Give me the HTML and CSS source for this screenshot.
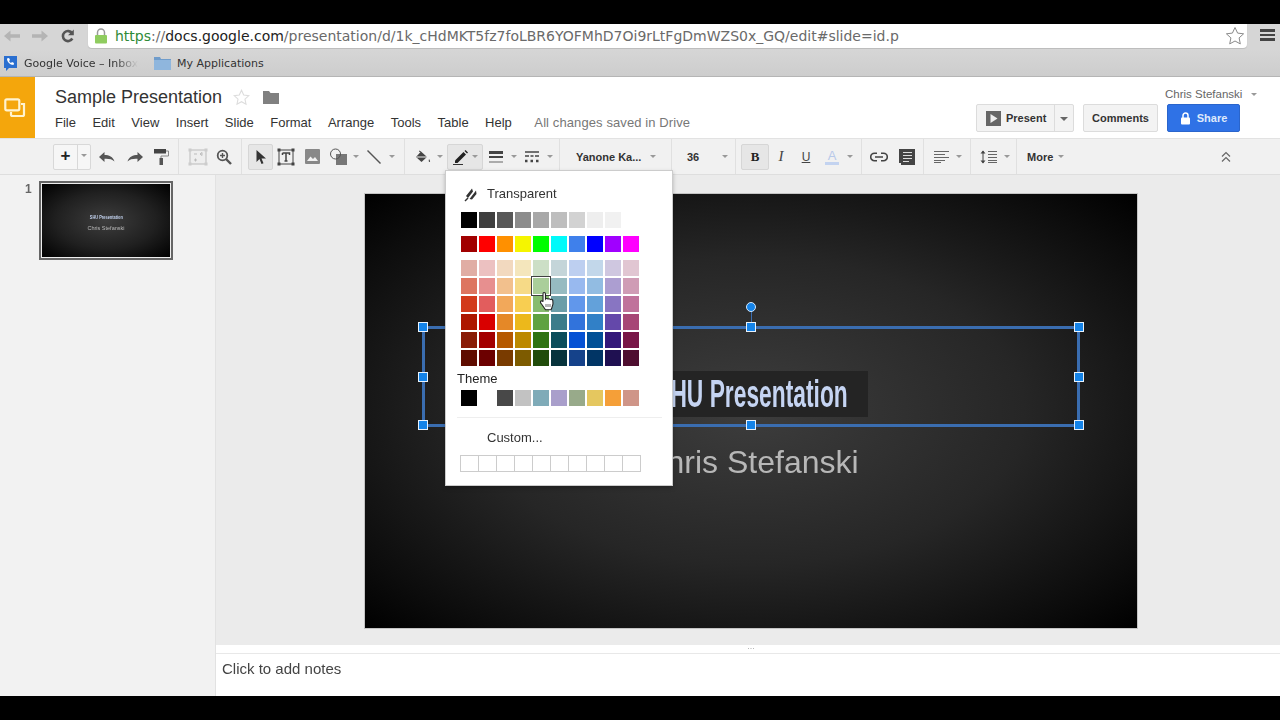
FILE: index.html
```html
<!DOCTYPE html>
<html lang="en">

<head>
  <meta charset="UTF-8" />
  <title>Sample Presentation</title>
  <link rel="stylesheet" href="styles.css">
</head>

<body>
  <div class="page">
    <div class="letterbox"></div>

    <!-- browser bar -->
    <div class="browser-bar">
      <svg class="nav-ico" width="20" height="16" viewBox="0 0 20 16"><path d="M18 6.300H8.500V2.500L2 8l6.500 5.500V9.700H18z" fill="#b4b4b4"/></svg>
      <svg class="nav-ico" width="20" height="16" viewBox="0 0 20 16"><path d="M2 6.300h9.500V2.500L18 8l-6.500 5.500V9.700H2z" fill="#b4b4b4"/></svg>
      <svg class="nav-ico" width="20" height="16" viewBox="0 0 20 16"><path d="M14.300 10.500a5 5 0 1 1-.2-5.200" fill="none" stroke="#555" stroke-width="2.600"/><path d="M15.800 1.500v5.800h-5.800z" fill="#555"/></svg>
      <div class="omnibox">
        <svg class="lock" width="14" height="16" viewBox="0 0 14 16"><path d="M3.500 7V4.500a3.500 3.500 0 0 1 7 0V7" fill="none" stroke="#9a9a9a" stroke-width="1.500"/><rect x="1" y="7" width="12" height="8.500" rx="1" fill="#8fcc5f"/></svg>
        <span class="url"><span class="url-https">https</span>://<span class="url-host">docs.google.com</span>/presentation/d/1k_cHdMKT5fz7foLBR6YOFMhD7Oi9rLtFgDmWZS0x_GQ/edit#slide=id.p</span>
        <svg class="url-star" width="20" height="20" viewBox="0 0 20 20"><path d="M10 1.500l2.600 5.600 6 .7-4.500 4.100 1.200 6L10 15l-5.300 2.900 1.200-6L1.400 7.800l6-.7z" fill="#fff" stroke="#8a8a8a"/></svg>
      </div>
      <div class="hamburger"><i></i><i></i><i></i></div>
    </div>

    <!-- bookmarks -->
    <div class="bookmarks">
      <div class="bookmark voice">
        <svg width="15" height="17" viewBox="0 0 15 17"><path d="M1 1h13v12H6l-3 3v-3H1z" fill="#2a6fd0"/><path d="M4 3.500l2-.5 1 2-1 1c.5 1 1.200 1.700 2 2l1-1 2 1-.5 2C7 10 4 7 4 3.500z" fill="#fff"/></svg>
        <span class="bookmark-fade">Google Voice – Inbox</span>
      </div>
      <div class="bookmark">
        <svg width="17" height="14" viewBox="0 0 17 14"><path d="M0 1h6l1 2h10v11H0z" fill="#6f9ccb"/><rect y="4" width="17" height="10" fill="#8fb6dd"/></svg>
        <span>My Applications</span>
      </div>
    </div>

    <!-- docs header -->
    <div class="docs-header">
      <div class="logo">
        <svg width="22" height="20" viewBox="0 0 22 20"><rect x="1.300" y="1.300" width="14" height="11" rx="1.500" fill="none" stroke="#fff3d0" stroke-width="2.200"/><path d="M17 6h3v10.500a1.500 1.500 0 0 1-1.500 1.500H8.500A1.500 1.500 0 0 1 7 16.500V14" fill="none" stroke="#fff3d0" stroke-width="2.200"/></svg>
      </div>
      <div class="title-block">
        <div class="title-row">
          <span class="doc-title">Sample Presentation</span>
          <svg class="title-star" width="17" height="17" viewBox="0 0 20 20"><path d="M10 1.500l2.600 5.600 6 .7-4.500 4.100 1.200 6L10 15l-5.300 2.900 1.200-6L1.400 7.800l6-.7z" fill="#fff" stroke="#ddd" stroke-width="1.300"/></svg>
          <svg class="title-folder" width="16" height="13" viewBox="0 0 16 13"><path d="M0 0h6l1.500 2H16v11H0z" fill="#808080"/></svg>
        </div>
        <div class="menu-row">
          <span>File</span><span>Edit</span><span>View</span><span>Insert</span><span>Slide</span><span>Format</span><span>Arrange</span><span>Tools</span><span>Table</span><span>Help</span>
          <span class="saved">All changes saved in Drive</span>
        </div>
      </div>
      <div class="header-right">
        <div class="user">Chris Stefanski <i class="caret"></i></div>
        <div class="header-btns">
          <div class="btn present">
            <span class="present-main">
              <svg width="15" height="15" viewBox="0 0 15 15"><rect width="15" height="15" fill="#666"/><path d="M4.500 3v9l7-4.500z" fill="#eee"/></svg>
              Present
            </span>
            <span class="present-drop"><i class="caret dark"></i></span>
          </div>
          <div class="btn comments">Comments</div>
          <div class="btn share">
            <svg width="11" height="13" viewBox="0 0 11 13"><path d="M3 6V3.500a2.500 2.500 0 0 1 5 0V6" fill="none" stroke="#fff" stroke-width="1.500"/><rect x="1" y="5.500" width="9" height="7" rx="1" fill="#fff"/></svg>
            Share
          </div>
        </div>
      </div>
    </div>

    <!-- toolbar -->
    <div class="toolbar">
      <div class="tb-group g-insert">
        <div class="plus-btn"><span class="plus-main">+</span><span class="plus-drop"><i class="caret"></i></span></div>
        <div class="tb-btn"><svg width="18" height="12" viewBox="0 0 18 12"><path d="M1 6l5.500-5v3c4.500 0 8.500 1.500 10 6.500-2.500-2.500-5.500-3-10-2.800V11z" fill="#555"/></svg></div>
        <div class="tb-btn"><svg width="18" height="12" viewBox="0 0 18 12"><path d="M17 6l-5.500-5v3C7 4 3 5.500 1.500 10.500c2.500-2.500 5.500-3 10-2.800V11z" fill="#555"/></svg></div>
        <div class="tb-btn paint-btn"><svg width="15" height="17" viewBox="0 0 15 17"><rect x="0" y="1" width="12" height="4.500" fill="#444"/><path d="M12 3h2.500v5H7v2" fill="none" stroke="#888" stroke-width="1"/><rect x="5.500" y="10" width="3.500" height="7" fill="#555"/></svg></div>
      </div>
      <div class="tb-group g-view">
        <div class="tb-btn"><svg width="20" height="18" viewBox="0 0 20 18"><rect x="2" y="2" width="16" height="14" fill="#eee" stroke="#bbb"/><rect x="0.500" y="0.500" width="3" height="3" fill="#ccc"/><rect x="16.500" y="0.500" width="3" height="3" fill="#ccc"/><rect x="0.500" y="14.500" width="3" height="3" fill="#ccc"/><rect x="16.500" y="14.500" width="3" height="3" fill="#ccc"/><path d="M6 6h3M12 6l2-1.500v3zM6 12h3M7.500 10.500v3" stroke="#bbb" fill="none"/></svg></div>
        <div class="tb-btn"><svg width="16" height="16" viewBox="0 0 16 16"><circle cx="6.500" cy="6.500" r="4.800" fill="none" stroke="#555" stroke-width="1.800"/><path d="M10 10l5 5" stroke="#555" stroke-width="2.400"/><path d="M4 6.500h5M6.500 4v5" stroke="#555" stroke-width="1.400"/></svg></div>
      </div>
      <div class="tb-group g-draw">
        <div class="tb-btn active cursor-btn"><svg width="12" height="16" viewBox="0 0 12 16"><path d="M1.500 1v12l3-3 2 5 2-.8-2-4.700H11z" fill="#333"/></svg></div>
        <div class="tb-btn"><svg width="18" height="18" viewBox="0 0 18 18"><rect x="2" y="2" width="14" height="14" fill="none" stroke="#444"/><path d="M5.500 5h7v2M9 5v8M7.500 13h3M5.500 5v2" fill="none" stroke="#444" stroke-width="1.500"/><g fill="#444"><rect x="0.500" y="0.500" width="3" height="3"/><rect x="14.500" y="0.500" width="3" height="3"/><rect x="0.500" y="14.500" width="3" height="3"/><rect x="14.500" y="14.500" width="3" height="3"/></g></svg></div>
        <div class="tb-btn"><svg width="15" height="15" viewBox="0 0 15 15"><rect width="15" height="15" rx="1" fill="#888"/><path d="M2 12l3.500-4.500L8 10l2-2 3 4z" fill="#f1f1f1"/></svg></div>
        <div class="tb-btn"><svg width="19" height="17" viewBox="0 0 19 17"><rect x="7" y="6" width="11" height="11" fill="#777"/><circle cx="6.500" cy="6" r="5" fill="none" stroke="#555"/></svg></div>
        <i class="caret tb-caret"></i>
        <div class="tb-btn"><svg width="16" height="16" viewBox="0 0 16 16"><path d="M1.500 1.500l13 13" stroke="#555" stroke-width="1.400"/></svg></div>
        <i class="caret tb-caret"></i>
      </div>
      <div class="tb-group g-line">
        <div class="tb-btn"><svg width="17" height="16" viewBox="0 0 17 16"><path d="M2 8l5-5.500L13 8l-5.500 5z" fill="#444"/><path d="M2.500 8h10.500" stroke="#f1f1f1"/><path d="M5 2l2 1" stroke="#444"/><path d="M15 10c1 1.500 1.500 2.500.7 3-.9.300-1.200-.8-.7-3z" fill="#444"/></svg></div>
        <i class="caret tb-caret"></i>
        <div class="tb-btn active pen-btn">
          <svg width="16" height="16" viewBox="0 0 16 16"><path d="M2 11.500L10.500 3l2.500 2.500L4.500 14H2z" fill="#222"/><path d="M11.500 2l1-1 2.500 2.500-1 1z" fill="#222"/><path d="M0 15.500h10" stroke="#333"/></svg>
          <i class="caret"></i>
        </div>
        <div class="tb-btn"><svg width="14" height="12" viewBox="0 0 14 12"><rect width="14" height="3" fill="#444"/><rect y="5" width="14" height="2" fill="#444"/><rect y="10.500" width="14" height="1" fill="#666"/></svg></div>
        <i class="caret tb-caret"></i>
        <div class="tb-btn"><svg width="14" height="12" viewBox="0 0 14 12"><path d="M0 1h14" stroke="#444" stroke-width="1.500"/><path d="M0 5h4M5.500 5h3M10 5h4" stroke="#444" stroke-width="1.500"/><path d="M0 10h2.500M5.500 10h2.500M11 10h2.500" stroke="#444" stroke-width="2.500"/></svg></div>
        <i class="caret tb-caret"></i>
      </div>
      <div class="tb-group g-font">
        <span class="tb-label font-name">Yanone Ka...</span>
        <i class="caret tb-caret"></i>
      </div>
      <div class="tb-group g-size">
        <span class="tb-label size-name">36</span>
        <i class="caret tb-caret"></i>
      </div>
      <div class="tb-group g-format">
        <div class="tb-btn active bold-btn">B</div>
        <div class="tb-btn italic-btn">I</div>
        <div class="tb-btn underline-btn">U</div>
        <div class="tb-btn color-btn"><span>A</span></div>
        <i class="caret tb-caret"></i>
      </div>
      <div class="tb-group g-link">
        <div class="tb-btn"><svg width="18" height="10" viewBox="0 0 18 10"><path d="M7 1.200H4.500a3.800 3.800 0 0 0 0 7.600H7M11 1.200h2.500a3.800 3.800 0 0 1 0 7.600H11M5 5h8" fill="none" stroke="#444" stroke-width="1.600"/></svg></div>
        <div class="tb-btn"><svg width="18" height="16" viewBox="0 0 18 16"><path d="M1 0h16v16H3v-2H1z" fill="#444"/><path d="M5 3.500h9M5 6.500h9M5 9.500h9M5 12.500h6" stroke="#ddd"/></svg></div>
      </div>
      <div class="tb-group g-align">
        <div class="tb-btn"><svg width="15" height="12" viewBox="0 0 15 12"><path d="M0 .5h15M0 3.500h11M0 6.500h15M0 9.500h11M0 11.500h7" stroke="#666"/></svg></div>
        <i class="caret tb-caret"></i>
      </div>
      <div class="tb-group g-spacing">
        <div class="tb-btn"><svg width="18" height="14" viewBox="0 0 18 14"><path d="M3 1v12" stroke="#444"/><path d="M0.500 3.500L3 .5l2.500 3zM0.500 10.500L3 13.500l2.500-3z" fill="#444"/><path d="M8 1.500h9M8 4.500h9M8 7.500h9M8 10.500h9M8 12.500h9" stroke="#666"/></svg></div>
        <i class="caret tb-caret"></i>
      </div>
      <div class="tb-group g-more">
        <span class="tb-label more-name">More</span>
        <i class="caret tb-caret"></i>
      </div>
      <div class="tb-btn collapse"><svg width="12" height="12" viewBox="0 0 12 12"><path d="M2 5.500L6 1.500l4 4M2 10.500l4-4 4 4" fill="none" stroke="#666" stroke-width="1.200"/></svg></div>
    </div>

    <!-- main area -->
    <div class="workspace">
      <div class="filmstrip">
        <span class="slide-num">1</span>
        <div class="thumb">
          <div class="thumb-inner">
            <span class="thumb-title">SHU Presentation</span>
            <span class="thumb-sub">Chris Stefanski</span>
          </div>
        </div>
      </div>
      <div class="editor">
        <div class="canvas">
          <div class="slide">
            <div class="title-band"><span class="title-text">SHU Presentation</span></div>
            <div class="subtitle">Chris Stefanski</div>
            <div class="sel-box"></div>
            <div class="rotate-line"></div>
            <i class="rotate-knob"></i>
            <i class="handle h-tl"></i><i class="handle h-tc"></i><i class="handle h-tr"></i>
            <i class="handle h-ml"></i><i class="handle h-mr"></i>
            <i class="handle h-bl"></i><i class="handle h-bc"></i><i class="handle h-br"></i>
          </div>
        </div>
        <div class="notes-grip"><span>...</span></div>
        <div class="notes">Click to add notes</div>
      </div>
    </div>

    <div class="letterbox bottom"></div>

    <!-- colour menu -->
    <div class="color-menu">
      <div class="cm-item">
        <svg class="cm-ico" width="13" height="15" viewBox="0 0 13 15"><path d="M2 9l6-7.500 1 3L4 11zM5.500 12L12 3.500l.5 3.500L8 12.500z" fill="#333"/><path d="M1 14l3-3" stroke="#333" stroke-width="1.500"/></svg>
        Transparent
      </div>
      <div class="swatches">
        <i style="background:#000"></i><i style="background:#3f3f3f"></i><i style="background:#585858"></i><i style="background:#8c8c8c"></i><i style="background:#a8a8a8"></i><i style="background:#bebebe"></i><i style="background:#d2d2d2"></i><i style="background:#eee"></i><i style="background:#f1f1f1"></i><i style="background:#fff"></i>
      </div>
      <div class="swatches brights tinted">
        <i style="background:#980000"></i><i style="background:#f00"></i><i style="background:#f90"></i><i style="background:#ff0"></i><i style="background:#0f0"></i><i style="background:#0ff"></i><i style="background:#4a86e8"></i><i style="background:#00f"></i><i style="background:#90f"></i><i style="background:#f0f"></i>
      </div>
      <div class="swatches shades tinted">
        <i style="background:#e6b8af"></i><i style="background:#f4cccc"></i><i style="background:#fce5cd"></i><i style="background:#fff2cc"></i><i style="background:#d9ead3"></i><i style="background:#d0e0e3"></i><i style="background:#c9daf8"></i><i style="background:#cfe2f3"></i><i style="background:#d9d2e9"></i><i style="background:#ead1dc"></i>
        <i style="background:#dd7e6b"></i><i style="background:#ea9999"></i><i style="background:#f9cb9c"></i><i style="background:#ffe599"></i><i class="hovered" style="background:#b6d7a8"></i><i style="background:#a2c4c9"></i><i style="background:#a4c2f4"></i><i style="background:#9fc5e8"></i><i style="background:#b4a7d6"></i><i style="background:#d5a6bd"></i>
        <i style="background:#cc4125"></i><i style="background:#e06666"></i><i style="background:#f6b26b"></i><i style="background:#ffd966"></i><i style="background:#93c47d"></i><i style="background:#76a5af"></i><i style="background:#6d9eeb"></i><i style="background:#6fa8dc"></i><i style="background:#8e7cc3"></i><i style="background:#c27ba0"></i>
        <i style="background:#a61c00"></i><i style="background:#c00"></i><i style="background:#e69138"></i><i style="background:#f1c232"></i><i style="background:#6aa84f"></i><i style="background:#45818e"></i><i style="background:#3c78d8"></i><i style="background:#3d85c6"></i><i style="background:#674ea7"></i><i style="background:#a64d79"></i>
        <i style="background:#85200c"></i><i style="background:#900"></i><i style="background:#b45f06"></i><i style="background:#bf9000"></i><i style="background:#38761d"></i><i style="background:#134f5c"></i><i style="background:#15c"></i><i style="background:#0b5394"></i><i style="background:#351c75"></i><i style="background:#741b47"></i>
        <i style="background:#5b0f00"></i><i style="background:#600"></i><i style="background:#783f04"></i><i style="background:#7f6000"></i><i style="background:#274e13"></i><i style="background:#0c343d"></i><i style="background:#1c4587"></i><i style="background:#073763"></i><i style="background:#20124d"></i><i style="background:#4c1130"></i>
      </div>
      <div class="cm-theme">Theme</div>
      <div class="swatches">
        <i style="background:#000"></i><i style="background:#fff"></i><i style="background:#484848"></i><i style="background:#c2c2c2"></i><i style="background:#7fabb8"></i><i style="background:#a99fcb"></i><i style="background:#98aa8a"></i><i style="background:#e5c75f"></i><i style="background:#f59f38"></i><i style="background:#cf9588"></i>
      </div>
      <div class="cm-sep"></div>
      <div class="cm-item cm-custom">Custom...</div>
      <div class="custom-row">
        <i></i><i></i><i></i><i></i><i></i><i></i><i></i><i></i><i></i><i></i>
      </div>
      <svg class="hand" width="17" height="20" viewBox="0 0 17 20"><path d="M5 1.500c1 0 1.500.7 1.500 1.500v5c.5-.7 2-.7 2.500 0 .7-.5 2-.3 2.300.5.800-.4 2.200-.2 2.500 1 .5 2 .2 5-1 7.500l-.8 1.800H6.500L2.500 13c-1-1.200-1.500-2.300-.5-3 .8-.5 1.800.2 2 .8V3c0-.8.300-1.500 1-1.500z" fill="#fff" stroke="#222" stroke-width="1.100"/><path d="M7 13v3M9 13v3M11 13v3" stroke="#444" stroke-width=".8"/></svg>
    </div>
  </div>
</body>

</html>
```

FILE: styles.css
```css
/* Page frame */
* {
  box-sizing: border-box;
}

body {
  margin: 0;
  background: #000;
  font-family: 'Liberation Sans', Arial, sans-serif;
  overflow: hidden;
}

/* the reference is a video frame, so everything is slightly soft */
.page {
  width: 1280px;
  height: 720px;
  position: relative;
  overflow: hidden;
  display: flex;
  flex-direction: column;
  filter: blur(0.35px);
}

.letterbox {
  height: 24px;
  background: #000;
  flex: none;
}

/* Browser chrome */
.browser-bar {
  height: 25px;
  flex: none;
  display: flex;
  background: #d6d6d6;
  padding-left: 2px;
  align-items: flex-start;
}

.nav-ico {
  width: 20px;
  margin: 4px 8px 0 0;
  flex: none;
}

.omnibox {
  width: 1159px;
  height: 24px;
  margin-left: 2px;
  background: #fff;
  border-radius: 0 0 4px 4px;
  box-shadow: 0 1px 1px #bbb;
  display: flex;
  align-items: center;
  padding-left: 6px;
}

.lock {
  margin-right: 7px;
  flex: none;
}

.url {
  font-family: 'DejaVu Sans', sans-serif;
  font-size: 14px;
  color: #6a6a6a;
  white-space: nowrap;
}

.url-https {
  color: #2f8a38;
}

.url-host {
  color: #222;
}

.url-star {
  margin-left: auto;
  margin-right: 2px;
}

.hamburger {
  margin: 5px 0 0 13px;
  width: 15px;
  display: flex;
  flex-direction: column;
  gap: 2px;
}

.hamburger i {
  height: 2.500px;
  background: #444;
}

.bookmarks {
  height: 28px;
  flex: none;
  display: flex;
  align-items: center;
  background: linear-gradient(#d6d6d6, #cdcdcd);
  border-bottom: 1px solid #b5b5b5;
  padding: 1px 0 0 3px;
  font-family: 'DejaVu Sans', sans-serif;
  font-size: 11px;
  color: #333;
}

.bookmark {
  display: flex;
  align-items: center;
  gap: 6px;
}

.voice {
  width: 151px;
}

.bookmark-fade {
  width: 114px;
  white-space: nowrap;
  overflow: hidden;
  -webkit-mask-image: linear-gradient(90deg, #000 80%, transparent);
  mask-image: linear-gradient(90deg, #000 80%, transparent);
}

/* Docs header */
.docs-header {
  height: 61px;
  flex: none;
  display: flex;
  background: #fff;
}

.logo {
  width: 35px;
  background: #f4a60c;
  display: flex;
  align-items: center;
  padding-left: 4px;
}

.title-block {
  padding: 8px 0 0 20px;
}

.title-row {
  display: flex;
  align-items: center;
  height: 24px;
}

.doc-title {
  font-size: 18px;
  color: #333;
}

.title-star {
  margin-left: 11px;
}

.title-folder {
  margin-left: 13px;
}

.menu-row {
  display: flex;
  margin-top: 6px;
  font-size: 13px;
  color: #333;
  gap: 16.500px;
  white-space: nowrap;
}

.menu-row .saved {
  color: #777;
  margin-left: 6px;
  letter-spacing: 0.1px;
}

.header-right {
  margin-left: auto;
  width: 304px;
  padding: 11px 40px 0 0;
}

.user {
  font-size: 11.500px;
  color: #666;
  padding-left: 189px;
  white-space: nowrap;
  height: 16px;
}

.user .caret {
  margin-left: 5px;
}

.header-btns {
  display: flex;
  gap: 9px;
}

.btn {
  height: 28px;
  font-size: 11px;
  font-weight: bold;
  border-radius: 2px;
  display: flex;
  align-items: center;
  white-space: nowrap;
}

.present,
.comments {
  background: #f3f3f3;
  border: 1px solid #dcdcdc;
  color: #333;
}

.present {
  width: 98px;
}

.present-main {
  width: 78px;
  height: 100%;
  display: flex;
  align-items: center;
  gap: 5px;
  padding-left: 9px;
  border-right: 1px solid #dcdcdc;
}

.present-drop {
  flex: 1;
  text-align: center;
}

.comments {
  width: 75px;
  justify-content: center;
}

.share {
  width: 73px;
  justify-content: center;
  gap: 6px;
  background: #2f72e6;
  color: #dfe9fb;
  border: 1px solid #2a65cc;
}

.caret {
  display: inline-block;
  width: 0;
  height: 0;
  border-left: 3px solid transparent;
  border-right: 3px solid transparent;
  border-top: 3px solid #999;
  vertical-align: middle;
}

.caret.dark {
  border-left-width: 4px;
  border-right-width: 4px;
  border-top: 4px solid #666;
}

/* Toolbar */
.toolbar {
  height: 37px;
  flex: none;
  display: flex;
  align-items: stretch;
  background: #f1f1f1;
  border-top: 1px solid #e2e2e2;
  border-bottom: 1px solid #dedede;
  padding-left: 53px;
  padding-right: 41px;
}

.tb-group {
  display: flex;
  align-items: center;
  flex: none;
  border-right: 1px solid #e0e0e0;
}

.g-insert { width: 126px; gap: 2px; }
.g-view { width: 63px; padding-left: 6px; }
.g-draw { width: 163px; padding-left: 6px; }
.g-line { width: 155px; padding-left: 4px; }
.g-font { width: 112px; padding-left: 16px; }
.g-size { width: 64px; padding-left: 15px; }
.g-format { width: 126px; padding-left: 5px; }
.g-link { width: 62px; padding-left: 4px; gap: 2px; }
.g-align { width: 47px; padding-left: 4px; }
.g-spacing { width: 46px; padding-left: 5px; }
.g-more { padding-left: 10px; border-right: 0; }

.tb-btn {
  width: 26px;
  height: 26px;
  flex: none;
  display: flex;
  align-items: center;
  justify-content: center;
}

.tb-btn.active {
  background: #e6e6e6;
  border: 1px solid #d6d6d6;
  border-radius: 2px;
}

.paint-btn {
  margin-left: -2px;
}

.cursor-btn {
  width: 25px;
}

.pen-btn {
  width: 36px;
  margin-left: 2px;
  gap: 3px;
}

.tb-caret {
  margin: 0 2px;
  flex: none;
}

.plus-btn {
  width: 38px;
  height: 26px;
  margin-right: 1px;
  display: flex;
  background: #f6f6f6;
  border: 1px solid #d8d8d8;
  border-radius: 2px;
}

.plus-main {
  width: 24px;
  text-align: center;
  font-size: 17px;
  font-weight: bold;
  line-height: 22px;
  color: #222;
  border-right: 1px solid #d8d8d8;
}

.plus-drop {
  flex: 1;
  text-align: center;
  line-height: 20px;
}

.tb-label {
  font-size: 11px;
  font-weight: bold;
  color: #333;
  white-space: nowrap;
}

.font-name { width: 72px; }
.size-name { width: 33px; }
.more-name { width: 29px; }

.bold-btn {
  width: 28px;
  font-size: 13px;
  font-weight: bold;
  font-family: 'Liberation Serif', serif;
  color: #222;
}

.italic-btn {
  width: 24px;
  font-family: 'Liberation Serif', serif;
  font-style: italic;
  font-size: 15px;
  color: #444;
}

.underline-btn {
  font-size: 12px;
  color: #444;
  text-decoration: underline;
}

.color-btn span {
  font-size: 13px;
  color: #b8c9ea;
  border-bottom: 3px solid #c3d3f0;
  line-height: 13px;
  padding: 0 3px;
}

.collapse {
  margin-left: auto;
  align-self: center;
}

/* Workspace */
.workspace {
  height: 521px;
  flex: none;
  display: flex;
}

.filmstrip {
  width: 216px;
  flex: none;
  background: #f2f2f2;
  border-right: 1px solid #e2e2e2;
  display: flex;
  align-items: flex-start;
  padding: 6px 0 0 25px;
}

.slide-num {
  width: 14px;
  font-size: 12px;
  font-weight: bold;
  color: #666;
  padding-top: 1px;
}

.thumb {
  width: 134px;
  height: 79px;
  border: 2px solid #666;
  padding: 1px;
  background: #eee;
}

.thumb-inner {
  height: 100%;
  background: radial-gradient(ellipse at center, #3d3d3d 0%, #202020 55%, #000 100%);
  display: flex;
  flex-direction: column;
  align-items: center;
  padding-top: 30px;
  gap: 5px;
}

.thumb-title {
  font-size: 6px;
  font-weight: bold;
  color: #c3d3f0;
  white-space: nowrap;
  transform: scaleX(0.65);
}

.thumb-sub {
  font-size: 5.500px;
  color: #bbb;
}

.editor {
  flex: 1;
  display: flex;
  flex-direction: column;
}

.canvas {
  height: 470px;
  flex: none;
  background: #ebebeb;
  padding: 19px 0 0 149px;
}

/* Slide and its selection */
.slide {
  width: 772px;
  height: 434px;
  position: relative;
  background: radial-gradient(ellipse at center, #3d3d3d 0%, #262626 50%, #0c0c0c 85%, #000 100%);
  box-shadow: 0 0 0 1px #c4c4c4;
}

.title-band {
  position: absolute;
  left: 269px;
  top: 177px;
  width: 234px;
  height: 46px;
  background: #242424;
  display: flex;
  align-items: center;
  justify-content: center;
  overflow: hidden;
}

/* Yanone Kaffeesatz is not available, so a bold sans is squeezed to its width */
.title-text {
  flex: none;
  color: #c5d4f2;
  font-weight: bold;
  font-size: 38px;
  line-height: 48px;
  white-space: nowrap;
  transform: scaleX(0.6);
}

.subtitle {
  position: absolute;
  left: 0;
  right: 0;
  top: 249px;
  text-align: center;
  font-size: 32px;
  line-height: 38px;
  color: #b7b7b7;
}

.sel-box {
  position: absolute;
  left: 57px;
  top: 132px;
  width: 658px;
  height: 101px;
  border: 3px solid #3a6db0;
}

.rotate-line {
  position: absolute;
  left: 386px;
  top: 113px;
  width: 1px;
  height: 20px;
  background: #3a6db0;
}

.rotate-knob {
  position: absolute;
  left: 381px;
  top: 108px;
  width: 10px;
  height: 10px;
  border-radius: 50%;
  background: #1483e8;
  border: 1px solid #d5e8fb;
}

.handle {
  position: absolute;
  width: 10px;
  height: 10px;
  background: #1483e8;
  border: 1px solid #e8f2fc;
}

.h-tl { left: 53px; top: 128px; }
.h-tc { left: 381px; top: 128px; }
.h-tr { left: 709px; top: 128px; }
.h-ml { left: 53px; top: 178px; }
.h-mr { left: 709px; top: 178px; }
.h-bl { left: 53px; top: 226px; }
.h-bc { left: 381px; top: 226px; }
.h-br { left: 709px; top: 226px; }

.notes-grip {
  height: 9px;
  flex: none;
  background: #fff;
  border-bottom: 1px solid #e8e8e8;
  text-align: center;
  font-size: 9px;
  line-height: 2px;
  color: #aaa;
  padding-left: 6px;
}

.notes {
  flex: 1;
  background: #fff;
  padding: 6px 0 0 6px;
  font-size: 15px;
  line-height: 17px;
  color: #444;
}

/* Colour picker menu */
.color-menu {
  position: absolute;
  left: 445px;
  top: 170px;
  width: 228px;
  background: #fff;
  border: 1px solid #ccc;
  box-shadow: 0 2px 4px rgba(0, 0, 0, 0.25);
  padding: 12px 0 13px;
  font-size: 13px;
  color: #333;
}

.cm-item {
  height: 22px;
  line-height: 22px;
  padding-left: 41px;
  position: relative;
  margin-bottom: 7px;
}

.cm-custom {
  margin-bottom: 6px;
}

.cm-ico {
  position: absolute;
  left: 18px;
  top: 4px;
}

.swatches {
  display: grid;
  grid-template-columns: repeat(10, 16px);
  gap: 2px;
  margin-left: 15px;
}

.swatches i {
  height: 16px;
}

.brights,
.shades {
  margin-top: 8px;
}

.tinted i {
  filter: brightness(0.95) saturate(1.15);
}

.swatches .hovered {
  outline: 1px solid #444;
  outline-offset: 1px;
  position: relative;
}

.cm-theme {
  margin: 4px 0 2px 11px;
  line-height: 18px;
  color: #222;
}

.cm-sep {
  height: 1px;
  background: #eee;
  margin: 11px 10px 9px 11px;
}

.custom-row {
  display: flex;
  margin-left: 14px;
}

.custom-row i {
  width: 18px;
  height: 17px;
  border: 1px solid #ccc;
  border-right-width: 0;
}

.custom-row i:last-child {
  width: 19px;
  border-right-width: 1px;
}

.hand {
  position: absolute;
  left: 93px;
  top: 120px;
}

.letterbox.bottom {
  flex: 1;
}
```
